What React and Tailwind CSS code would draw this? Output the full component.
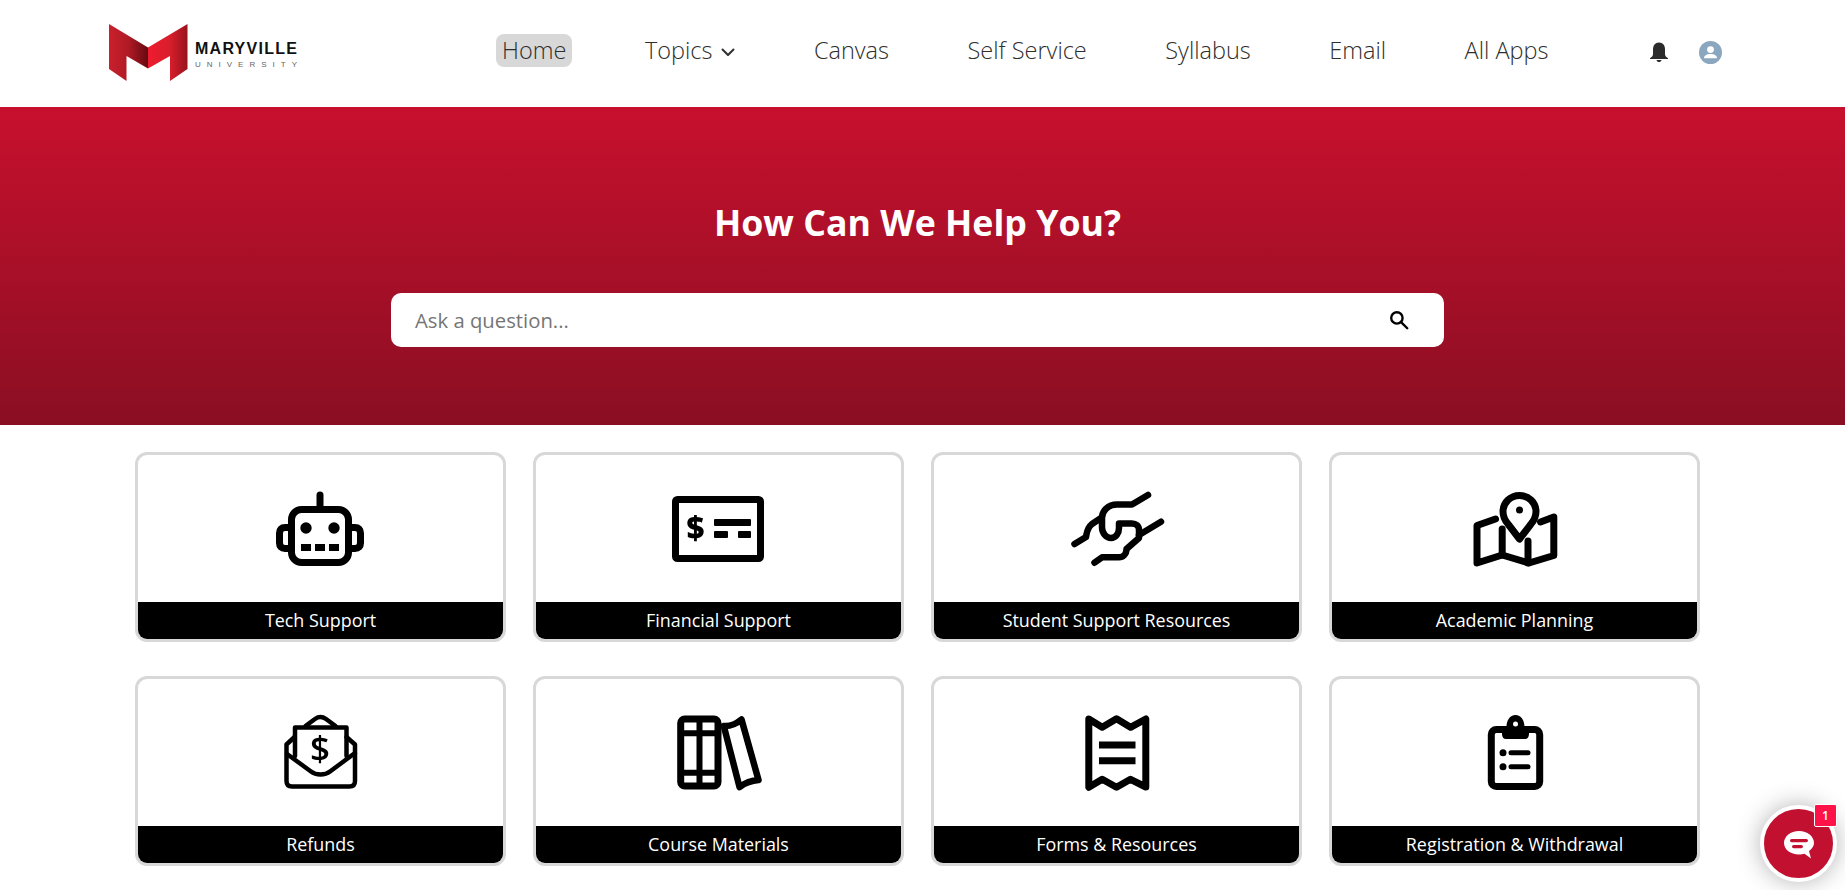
import React from 'react'

const navItems = ['Canvas', 'Self Service', 'Syllabus', 'Email', 'All Apps']

function Logo() {
  return (
    <div className="flex items-center gap-[7px] mb-[3px]">
      <svg width="79" height="57" viewBox="0 0 79 57" aria-hidden="true">
        <defs>
          <linearGradient id="mLeft" x1="0" x2="1" y1="0" y2="0">
            <stop offset="0" stopColor="#c9202c" />
            <stop offset="0.5" stopColor="#b01a25" />
            <stop offset="1" stopColor="#640a10" />
          </linearGradient>
          <linearGradient id="mRight" x1="0" x2="1" y1="0" y2="0">
            <stop offset="0" stopColor="#ee1c2e" />
            <stop offset="0.55" stopColor="#d81e2c" />
            <stop offset="1" stopColor="#98131c" />
          </linearGradient>
        </defs>
        <polygon points="0,0 39,23.5 39,44.5 17.5,32 17.5,57 0,45" fill="url(#mLeft)" />
        <polygon points="39,23.5 78.5,0 78.5,45 61,57 61,32 39,44.5" fill="url(#mRight)" />
      </svg>
      <div className="flex flex-col font-['Liberation_Sans',sans-serif] mt-[7px]">
        <span className="text-[16px] leading-[16px] font-bold tracking-[1.25px] text-[#111111]">MARYVILLE</span>
        <span className="text-[8px] leading-[10px] mt-[3px] tracking-[6px] text-[#666666]">UNIVERSITY</span>
      </div>
    </div>
  )
}

function Header() {
  return (
    <header className="h-[107px] bg-white flex items-center pl-[109px]">
      <Logo />
      <nav className="flex items-center gap-[66.5px] ml-[193px] text-[23.5px] leading-[33px] font-light text-[#2e2e2c] mb-[6px]">
        <a className="px-[6px] rounded-[8px] bg-[#d8d8d8]">Home</a>
        <a className="px-[6px] flex items-center gap-[9px]">
          Topics
          <svg width="14" height="9" viewBox="0 0 14 9" fill="none" stroke="#2f2f2f" strokeWidth="2" strokeLinecap="round" strokeLinejoin="round" className="mt-[4px]">
            <path d="M1.5 1.5 L7 7 L12.5 1.5" />
          </svg>
        </a>
        {navItems.map((n) => (
          <a key={n} className="px-[6px]">{n}</a>
        ))}
      </nav>
      <svg width="20" height="20" viewBox="0 0 20 20" className="ml-[95px] mb-[3px]" fill="#2b2b2b" aria-hidden="true">
        <path d="M10 0.5 C6 0.5 4 3.5 4 7.5 V12 C4 14 2.8 15 1 16.2 V17 H19 V16.2 C17.2 15 16 14 16 12 V7.5 C16 3.5 14 0.5 10 0.5 Z" />
        <path d="M7.5 18 H12.5 C12.2 19.4 11.2 20 10 20 C8.8 20 7.8 19.4 7.5 18 Z" />
      </svg>
      <svg width="23" height="23" viewBox="0 0 23 23" className="ml-[30px] mb-[3px]" aria-hidden="true">
        <circle cx="11.5" cy="11.5" r="11.5" fill="#8ba6bf" />
        <circle cx="11.5" cy="8.6" r="3.4" fill="#ffffff" />
        <path d="M5 17.2 C5 14.4 8 13 11.5 13 C15 13 18 14.4 18 17.2 Z" fill="#ffffff" />
      </svg>
    </header>
  )
}

function Hero() {
  return (
    <section className="h-[318px] bg-gradient-to-b from-[#c8102e] to-[#8a0e22] flex flex-col items-center pt-[91px] pr-[10px]">
      <h1 className="text-[35.7px] leading-[49px] font-bold text-white">How Can We Help You?</h1>
      <div className="mt-[46px] w-[1053px] h-[54px] bg-white rounded-[10px] flex items-center justify-between pl-[24px] pr-[34px]">
        <span className="text-[20.3px] text-[#757575]">Ask a question...</span>
        <svg width="22" height="22" viewBox="0 0 24 24" fill="none" stroke="#000000" strokeWidth="2.6" strokeLinecap="round" aria-hidden="true">
          <circle cx="9.7" cy="9.7" r="6.2" />
          <path d="M14.5 14.5 L21 21" />
        </svg>
      </div>
    </section>
  )
}

const iconProps = {
  width: 96,
  height: 96,
  viewBox: '0 0 96 96',
  fill: 'none',
  stroke: '#000000',
  strokeWidth: 7,
  strokeLinecap: 'round',
  strokeLinejoin: 'round',
}

function RobotIcon() {
  return (
    <svg {...iconProps}>
      <g transform="translate(-1 0)">
        <rect x="19.5" y="27.5" width="57" height="53" rx="10" />
        <path d="M48 13 V26" />
        <path d="M17 45.5 H13 C9.5 45.5 7.5 47.5 7.5 51 V61 C7.5 64.5 9.5 66.5 13 66.5 H17" />
        <path d="M79 45.5 H83 C86.5 45.5 88.5 47.5 88.5 51 V61 C88.5 64.5 86.5 66.5 83 66.5 H79" />
        <g fill="#000000" stroke="none">
          <circle cx="34" cy="46" r="5.7" />
          <circle cx="62" cy="46" r="5.7" />
          <rect x="29" y="62" width="10" height="7" />
          <rect x="43" y="62" width="10" height="7" />
          <rect x="57" y="62" width="10" height="7" />
        </g>
      </g>
    </svg>
  )
}

function CheckIcon() {
  return (
    <svg {...iconProps} className="will-change-transform">
      <rect x="4.5" y="17.5" width="85" height="59" rx="2" />
      <text x="24.5" y="57" textAnchor="middle" fill="#000000" stroke="none" fontSize="31" fontWeight="800" fontFamily="'Open Sans', sans-serif">$</text>
      <g fill="#000000" stroke="none">
        <rect x="43" y="37" width="37" height="7" rx="1" />
        <rect x="43" y="49" width="14" height="7" rx="1" />
        <rect x="67" y="49" width="13" height="7" rx="1" />
      </g>
    </svg>
  )
}

function HandshakeIcon() {
  return (
    <svg {...iconProps} strokeWidth={6.5}>
      <path d="M5.5 62 L17 55 C18 50 18 46 23 42 L32 36" />
      <path d="M79 13 L63 22.5 H48 C39 22.5 33 29 33 36 V45 C33 51 37 56 42 56 C47 56 50 51 50 46 V41.5 H63 C67 41.5 70 44 70 48 V56 L62 63 L57.5 67 C57.5 72 54 75.3 50 75.3 H33 L25.5 80.7" />
      <path d="M70 53 L92 39.7" />
    </svg>
  )
}

function MapIcon() {
  return (
    <svg {...iconProps}>
      <path d="M52.5 57 L41 42 C38 38.5 36 34.5 36 29.5 C36 20.5 43.5 13.5 52.5 13.5 C61.5 13.5 69 20.5 69 29.5 C69 34.5 67 38.5 64 42 Z" />
      <circle cx="52.5" cy="28" r="3.5" fill="#000000" stroke="none" />
      <path d="M28.5 37 L10 43.5 V81 L35.2 73 L62 81 L86.8 73.5 V35 L73.5 40" />
      <path d="M35.2 47 V73" />
      <path d="M61 59 V81" />
    </svg>
  )
}

function RefundIcon() {
  return (
    <svg {...iconProps} strokeWidth={4.5} className="will-change-transform">
      <path d="M21.5 31 L13.5 38.5 V75 C13.5 78.5 15.5 80.5 19 80.5 H76.5 C80 80.5 82 78.5 82 75 V38.5 L73.5 31" />
      <path d="M14 48 L38 65.5 C43 69.5 52 69.5 57 65.5 L82 47" />
      <path d="M22 50 V21.5 H73.5 V50" />
      <path d="M32.5 20 L42 13 C45.5 10.5 49.5 10.5 53 13 L62.5 20" />
      <text x="47" y="55" textAnchor="middle" fill="#000000" stroke="none" fontSize="35" fontWeight="600" fontFamily="'Open Sans', sans-serif">$</text>
    </svg>
  )
}

function BooksIcon() {
  return (
    <svg {...iconProps}>
      <rect x="9.7" y="13" width="37.3" height="67" rx="4" />
      <path d="M28.5 13 V80" strokeWidth={6} />
      <path d="M10 27.3 H47" strokeWidth={6} />
      <path d="M10 66.7 H47" strokeWidth={6} />
      <path d="M52.8 20 C58 20.5 65 18 70.5 13.5 L87.5 74 C81 74.5 74 77 68.5 81 Z" strokeWidth={6.5} />
    </svg>
  )
}

function ReceiptIcon() {
  return (
    <svg {...iconProps}>
      <path d="M19.8 13 L33.2 21.3 L47.5 12.8 L61.5 21.3 L76.8 13 V81 L61.5 73.3 L47.5 81.3 L33.2 73.3 L19.8 81.3 Z" />
      <path d="M30 39 H66.5" strokeLinecap="butt" />
      <path d="M30 54.7 H66.5" strokeLinecap="butt" />
    </svg>
  )
}

function ClipboardIcon() {
  return (
    <svg {...iconProps}>
      <rect x="24.3" y="23.5" width="48.4" height="57" rx="5" />
      <path d="M35 21 H39.5 C39.5 14 43 9 48.5 9 C54 9 57.5 14 57.5 21 H62 V28 C62 31 60.5 33 58 33 H39 C36.5 33 35 31 35 28 Z" fill="#000000" stroke="none" />
      <circle cx="48.5" cy="18" r="2.5" fill="#ffffff" stroke="none" />
      <g fill="#000000" stroke="none">
        <circle cx="36" cy="46.7" r="3.5" />
        <circle cx="36" cy="60.7" r="3.5" />
      </g>
      <path d="M44 46.7 H61" strokeWidth={5} />
      <path d="M44 60.7 H61" strokeWidth={5} />
    </svg>
  )
}

const cards = [
  { label: 'Tech Support', Icon: RobotIcon },
  { label: 'Financial Support', Icon: CheckIcon },
  { label: 'Student Support Resources', Icon: HandshakeIcon },
  { label: 'Academic Planning', Icon: MapIcon },
  { label: 'Refunds', Icon: RefundIcon },
  { label: 'Course Materials', Icon: BooksIcon },
  { label: 'Forms & Resources', Icon: ReceiptIcon },
  { label: 'Registration & Withdrawal', Icon: ClipboardIcon },
]

function Card({ label, Icon }) {
  return (
    <a className="h-[190px] border-[3px] border-[#d8d8d8] rounded-[12px] overflow-hidden flex flex-col bg-white">
      <div className="flex-1 flex justify-center pt-[27px]">
        <Icon />
      </div>
      <div className="h-[37px] bg-black text-white text-[17.9px] leading-[37px] text-center">{label}</div>
    </a>
  )
}

function ChatButton() {
  return (
    <div className="fixed left-[1760px] top-[805px] w-[77px] h-[77px] rounded-full bg-[#c11030] border-[4px] border-white shadow-[0_0_24px_rgba(0,0,0,0.3)] flex items-center justify-center">
      <svg width="32" height="30" viewBox="0 0 32 30" aria-hidden="true" className="mt-[3px]">
        <path d="M16 1 C7.5 1 1 6.5 1 13 C1 19.5 7.5 24.5 16 24.5 C18 24.5 20 24.2 21.5 23.8 L28 28.5 L26 21 C29 18.8 31 16 31 13 C31 6.5 24.5 1 16 1 Z" fill="#ffffff" />
        <rect x="7" y="9" width="18" height="3.2" rx="1.6" fill="#c11030" />
        <rect x="9" y="15" width="11" height="3.2" rx="1.6" fill="#c11030" />
      </svg>
      <span className="absolute left-[50px] top-[-5px] w-[23px] h-[23px] bg-[#ff1248] border border-white rounded-[2px] text-white text-[12px] leading-[21px] text-center font-semibold">1</span>
    </div>
  )
}

export default function App() {
  return (
    <div className="h-screen overflow-hidden bg-white font-['Open_Sans',sans-serif]">
      <Header />
      <Hero />
      <main className="grid grid-cols-4 gap-x-[27px] gap-y-[33.5px] pt-[27px] pl-[135px] pr-[145px]">
        {cards.map((c) => (
          <Card key={c.label} label={c.label} Icon={c.Icon} />
        ))}
      </main>
      <ChatButton />
    </div>
  )
}
